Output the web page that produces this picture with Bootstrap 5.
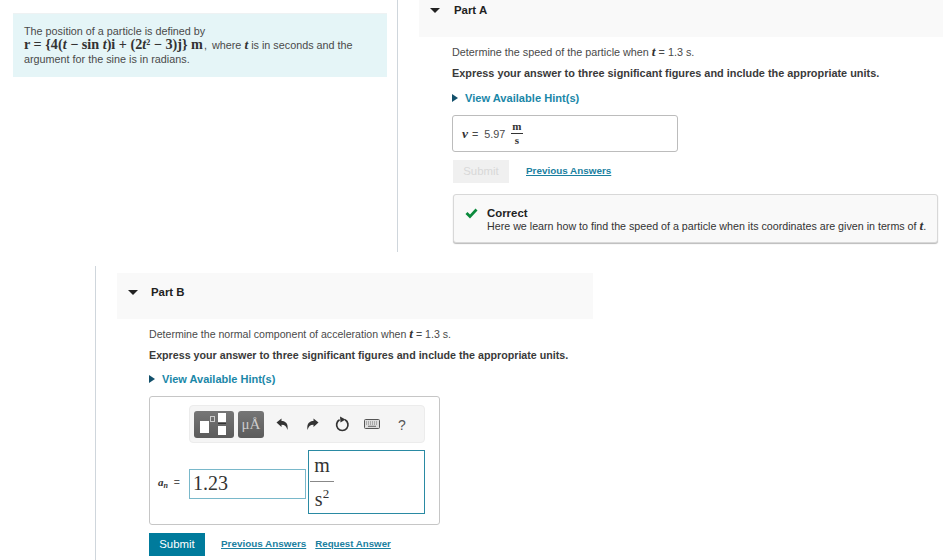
<!DOCTYPE html>
<html lang="en">
<head>
<meta charset="utf-8">
<title>Particle problem</title>
<link href="https://cdn.jsdelivr.net/npm/bootstrap@5.3.0/dist/css/bootstrap.min.css" rel="stylesheet">
<style>
html,body{height:560px;overflow:hidden}
body{font-family:"Liberation Sans",Arial,sans-serif;font-size:10.8px;line-height:14px;color:#4a4a4a;background:#fff}
.toprow{height:252px}
.leftpane{width:398px;border-right:1px solid #cfd6dc;padding-top:13px}
.intro{margin-left:13px;width:374px;height:64px;background:#e5f5f7;padding:10px 11px;line-height:14px;border-top:1px solid #eef2f3}
.eq{font-family:"Liberation Serif",serif;font-weight:700;font-size:14.2px;line-height:10px;color:#333;margin-right:1px}
.eq sup{font-size:8px;line-height:0}
.eqtail{margin-left:2px}
.mi{font-family:"Liberation Serif",serif;font-weight:700;font-style:italic;font-size:13.5px;line-height:10px;color:#333}
.rightpane{padding-left:21px;flex:1 1 0;min-width:0}
.parthead{background:#f9f9f9;display:flex;color:#222;font-weight:700;font-size:11.4px}
.parthead .tri{width:0;height:0;border-left:5px solid transparent;border-right:5px solid transparent;border-top:5px solid #222}
.heada{height:37px;padding:3px 0 0 11px}
.heada .tri{margin:5px 14px 0 0}
.headb{height:46px;width:476px;padding:12px 0 0 11px}
.headb .tri{margin:5px 13px 0 0}
.bodya{padding-left:33px}
.line1{margin:8px 0 0;height:14px}
.line2{margin:7px 0 0;height:14px;font-weight:700;color:#3a3a3a;font-size:10.9px}
.hint{margin:11px 0 0;height:14px;font-weight:700;color:#1a87a8;font-size:11.1px;display:flex;align-items:center}
.hint .arrow{width:0;height:0;border-top:4px solid transparent;border-bottom:4px solid transparent;border-left:6px solid #12506b;margin-right:7px}
.answerbox{width:226px;height:37px;border:1px solid #bcbcbc;border-radius:3px;margin-top:10px;padding-left:9px;display:flex;align-items:center;gap:4px}
.frac{display:inline-flex;flex-direction:column;align-items:center;font-family:"Liberation Serif",serif;font-weight:700;font-size:11px;line-height:9px;color:#333;margin-left:2px}
.frac .num{border-bottom:1px solid #333;padding:0 1px 2px}
.frac .den{padding-top:2px}
.actions{display:flex;align-items:center;margin-top:8px}
.actions.shifted{padding-left:1px}
.btnsub{width:56px;height:23px;padding:0;border-radius:0;border:0;font-size:11.4px;line-height:23px}
.btnoff:disabled{background:#f0f0f0;color:#d8d8d8;opacity:1}
.btnon{background:#007b9c;color:#fff}
.plink{color:#1a7f9f;font-weight:700;font-size:9.9px;text-decoration:underline;margin:0 0 2px 16px}
.shifted .plink{margin-left:17px}
.plink + .plink{margin-left:9px;font-size:9.7px}
.feedback{width:485px;height:49px;margin:11px 0 0 1px;background:#f9f9f9;border:1px solid #d8d8d8;border-radius:3px;box-shadow:0 1px 1px #bbb;display:flex;padding:11px 0 0 11px;color:#333}
.feedback strong{color:#222;font-size:11.4px;display:block;line-height:14px}
.feedback svg{margin:2px 9px 0 0;flex:none}
.feedback .msg{font-size:10.7px;line-height:13px;white-space:nowrap}
.lowersec{margin:14px 0 0 95px;border-left:1px solid #cfd6dc;height:294px;padding:7px 0 0 21px}
.bodyb{padding-left:32px;font-size:10.6px}
.bodyb .line2{font-size:10.7px}
.bodyb .hint{margin-top:10px;font-size:11px}
.workbox{width:291px;height:129px;border:1px solid #c6c6c6;border-radius:3px;margin-top:10px;padding:8px 0 0 39px}
.toolbar{width:236px;height:38px;background:#f5f5f5;border:1px solid #ececec;border-radius:4px;display:flex;align-items:center;padding-left:4px}
.tbtn{height:27px;border-radius:3px;background:#666;background-image:linear-gradient(#767676,#5b5b5b);display:flex;align-items:center;justify-content:center;color:#ccc}
.tbtn1{width:40px}
.tbtn2{width:26px;margin-left:4px;font-family:"Liberation Serif",serif;font-size:15px}
.icb{width:30px;display:flex;justify-content:center;color:#444}
.icb.first{margin-left:3px}
.qmark{font-size:14px;color:#555;padding-top:1px}
.mathrow{display:flex;align-items:center;margin:7px 0 0 -31px}
.lbl{width:31px;font-size:10.5px;white-space:nowrap;color:#555}
.lbl i{font-family:"Liberation Serif",serif;font-weight:700;font-size:11px;color:#333}
.lbl sub{font-size:8px}
.valbox{width:117px;height:30px;margin-top:4px;border:1px solid #79b8ca;font-family:"Liberation Serif",serif;font-size:20px;line-height:27px;padding-left:3px;color:#333}
.unitbox{width:117px;height:64px;border:1px solid #2a8aa3;margin-left:2px;font-family:"Liberation Serif",serif;font-size:20px;color:#333;padding:0 0 0 1px}
.unitfrac{width:24px;text-align:center}
.unitfrac .u1{height:31px;line-height:28px;border-bottom:1px solid #888}
.unitfrac .u2{line-height:34px}
.unitfrac sup{font-size:13px;top:-.6em;line-height:0;position:relative;vertical-align:baseline}
</style>
</head>
<body>
<div class="d-flex toprow">
  <div class="leftpane">
    <div class="intro">The position of a particle is defined by<br><span class="eq">r = {4(<i>t</i> − sin <i>t</i>)i + (2<i>t</i><sup>2</sup> − 3)j} m</span>, <span class="eqtail">where</span> <span class="mi">t</span> is in seconds and the<br>argument for the sine is in radians.</div>
  </div>
  <div class="rightpane">
    <div class="parthead heada"><span class="tri"></span><span>Part A</span></div>
    <div class="bodya">
      <p class="line1">Determine the speed of the particle when <span class="mi">t</span> = 1.3 s.</p>
      <p class="line2">Express your answer to three significant figures and include the appropriate units.</p>
      <p class="hint"><span class="arrow"></span>View Available Hint(s)</p>
      <div class="answerbox"><span class="mi">v</span> = &nbsp;5.97 <span class="frac"><span class="num">m</span><span class="den">s</span></span></div>
      <div class="actions shifted"><button class="btn btnsub btnoff" disabled>Submit</button><a class="plink" href="#">Previous Answers</a></div>
      <div class="feedback">
        <svg width="13" height="11" viewBox="0 0 13 11"><path d="M0.5 6 L2.5 4 L5 6.5 L10.5 0.5 L12.5 2.5 L5 10.5 Z" fill="#0b8a3c"/></svg>
        <div class="msg"><strong>Correct</strong>Here we learn how to find the speed of a particle when its coordinates are given in terms of <span class="mi">t</span>.</div>
      </div>
    </div>
  </div>
</div>
<div class="lowersec">
  <div class="parthead headb"><span class="tri"></span><span>Part B</span></div>
  <div class="bodyb">
    <p class="line1">Determine the normal component of acceleration when <span class="mi">t</span> = 1.3 s.</p>
    <p class="line2">Express your answer to three significant figures and include the appropriate units.</p>
    <p class="hint"><span class="arrow"></span>View Available Hint(s)</p>
    <div class="workbox">
      <div class="toolbar">
        <div class="tbtn tbtn1"><svg width="32" height="24" viewBox="0 0 32 24"><rect x="2" y="9" width="9" height="12" fill="#fff"/><rect x="12.5" y="4.5" width="4" height="5" fill="none" stroke="#ccc"/><rect x="20" y="1" width="8" height="9" fill="#fff"/><path d="M20 11.5 H28" stroke="#333"/><rect x="20" y="14" width="8" height="9" fill="#fff"/></svg></div>
        <div class="tbtn tbtn2">μÅ</div>
        <div class="icb first"><svg width="13" height="13" viewBox="0 0 13 13"><path d="M0.5 4.5 L5.5 0.5 V3 C9.5 3 12.5 5.5 11.5 12 C10.5 8.5 9 6.8 5.5 6.8 V9 Z" fill="#333"/></svg></div>
        <div class="icb"><svg width="13" height="13" viewBox="0 0 13 13"><path d="M12.5 4.5 L7.5 0.5 V3 C3.5 3 0.5 5.5 1.5 12 C2.5 8.5 4 6.8 7.5 6.8 V9 Z" fill="#333"/></svg></div>
        <div class="icb"><svg width="15" height="16" viewBox="0 0 15 16"><path d="M10 3.8 A5.7 5.7 0 1 1 4.6 3.8" fill="none" stroke="#333" stroke-width="1.7"/><path d="M5 0.5 L10.5 3.5 L5.5 6.5 Z" fill="#333"/></svg></div>
        <div class="icb"><svg width="16" height="10" viewBox="0 0 16 10"><rect x="0.5" y="0.5" width="15" height="9" rx="1" fill="#ddd" stroke="#555"/><path d="M2 3 H14 M2 5 H14" stroke="#777" stroke-dasharray="1 1"/><path d="M4 7.3 H12" stroke="#666"/></svg></div>
        <div class="icb qmark">?</div>
      </div>
      <div class="mathrow">
        <span class="lbl"><i>a<sub>n</sub></i> &nbsp;=</span>
        <div class="valbox">1.23</div>
        <div class="unitbox"><div class="unitfrac"><div class="u1">m</div><div class="u2">s<sup>2</sup></div></div></div>
      </div>
    </div>
    <div class="actions"><button class="btn btnsub btnon">Submit</button><a class="plink" href="#">Previous Answers</a><a class="plink" href="#">Request Answer</a></div>
  </div>
</div>
<script src="https://cdn.jsdelivr.net/npm/bootstrap@5.3.0/dist/js/bootstrap.bundle.min.js"></script>
</body>
</html>
